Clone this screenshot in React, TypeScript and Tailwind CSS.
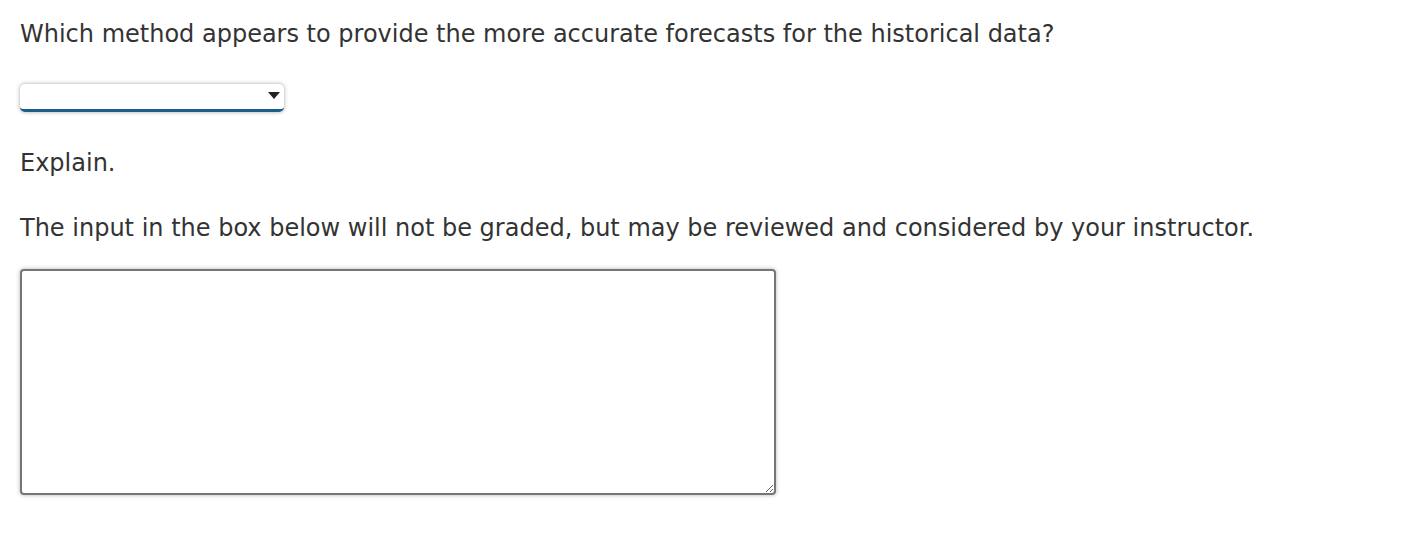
import React from 'react';

const App: React.FC = () => {
  return (
    <div className="min-h-screen bg-white px-5 pt-[18px] text-[#333] text-[24px] leading-[32px]" style={{ fontFamily: '"DejaVu Sans", Verdana, sans-serif' }}>
      <p>Which method appears to provide the more accurate forecasts for the historical data?</p>

      <div className="mt-[34px] relative w-[264px] h-[28px] rounded-[5px] bg-white shadow-[0_0_4px_rgba(0,0,0,0.35)] border-b-[3px] border-[#1c5e8a]">
        <svg className="absolute right-[4px] top-[8px]" width="12" height="8" viewBox="0 0 12 8">
          <polygon points="0,0 12,0 6,7" fill="#222" />
        </svg>
      </div>

      <p className="mt-[35px]">Explain.</p>

      <p className="mt-[33px]">The input in the box below will not be graded, but may be reviewed and considered by your instructor.</p>

      <div className="mt-[25px] w-[756px] h-[226px]">
        <textarea
          className="block w-full h-full resize rounded-[4px] border-2 border-[#767676] bg-white shadow-[0_0_4px_rgba(0,0,0,0.3)] outline-none p-1"
          style={{ fontFamily: '"DejaVu Sans", Verdana, sans-serif' }}
        />
      </div>
    </div>
  );
};

export default App;
